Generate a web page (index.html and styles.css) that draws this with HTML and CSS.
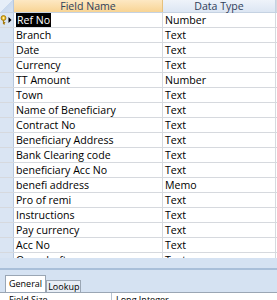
FILE: index.html
```html
<!DOCTYPE html>
<html lang="en">

<head>
    <meta charset="UTF-8">
    <title>Table Design</title>
    <link rel="stylesheet" href="styles.css">
</head>

<body>
    <div class="design">
        <div class="grid">
            <div class="row head">
                <div class="sel corner"></div>
                <div class="cell name-head">Field Name</div>
                <div class="cell type-head">Data Type</div>
                <div class="cell desc"></div>
            </div>
            <div class="row">
                <div class="sel current">
                    <svg width="13" height="10" viewBox="0 0 13 10">
                        <circle cx="3.5" cy="3" r="2.4" fill="#f2c62e" stroke="#a57a0d" stroke-width="1"/>
                        <circle cx="3.5" cy="3" r="0.8" fill="#fff"/>
                        <path d="M3.5 5.2 V9 M3.5 7.5 H5.3 M3.5 8.8 H5" stroke="#a57a0d" stroke-width="1.2"/>
                        <path d="M8.5 2 L11.5 5 L8.5 8 Z" fill="#000"/>
                    </svg>
                </div>
                <div class="cell"><span class="picked">Ref No</span></div>
                <div class="cell">Number</div>
                <div class="cell desc"></div>
            </div>
            <div class="row"><div class="sel"></div><div class="cell">Branch</div><div class="cell">Text</div><div class="cell desc"></div></div>
            <div class="row"><div class="sel"></div><div class="cell">Date</div><div class="cell">Text</div><div class="cell desc"></div></div>
            <div class="row"><div class="sel"></div><div class="cell">Currency</div><div class="cell">Text</div><div class="cell desc"></div></div>
            <div class="row"><div class="sel"></div><div class="cell">TT Amount</div><div class="cell">Number</div><div class="cell desc"></div></div>
            <div class="row"><div class="sel"></div><div class="cell">Town</div><div class="cell">Text</div><div class="cell desc"></div></div>
            <div class="row"><div class="sel"></div><div class="cell">Name of Beneficiary</div><div class="cell">Text</div><div class="cell desc"></div></div>
            <div class="row"><div class="sel"></div><div class="cell">Contract No</div><div class="cell">Text</div><div class="cell desc"></div></div>
            <div class="row"><div class="sel"></div><div class="cell">Beneficiary Address</div><div class="cell">Text</div><div class="cell desc"></div></div>
            <div class="row"><div class="sel"></div><div class="cell">Bank Clearing code</div><div class="cell">Text</div><div class="cell desc"></div></div>
            <div class="row"><div class="sel"></div><div class="cell">beneficiary Acc No</div><div class="cell">Text</div><div class="cell desc"></div></div>
            <div class="row"><div class="sel"></div><div class="cell">benefi address</div><div class="cell">Memo</div><div class="cell desc"></div></div>
            <div class="row"><div class="sel"></div><div class="cell">Pro of remi</div><div class="cell">Text</div><div class="cell desc"></div></div>
            <div class="row"><div class="sel"></div><div class="cell">Instructions</div><div class="cell">Text</div><div class="cell desc"></div></div>
            <div class="row"><div class="sel"></div><div class="cell">Pay currency</div><div class="cell">Text</div><div class="cell desc"></div></div>
            <div class="row"><div class="sel"></div><div class="cell">Acc No</div><div class="cell">Text</div><div class="cell desc"></div></div>
            <div class="row"><div class="sel"></div><div class="cell">Over draft</div><div class="cell">Text</div><div class="cell desc"></div></div>
        </div>

        <div class="splitter"></div>

        <div class="tab-bar">
            <div class="tab active">General</div>
            <div class="tab">Lookup</div>
        </div>

        <div class="props">
            <div class="prop-name">Field Size</div>
            <div class="prop-value">Long Integer</div>
        </div>
    </div>
</body>

</html>
```

FILE: styles.css
```css
body {
    margin: 0;
    padding: 0;
    background-color: #ffffff;
    font-family: "Open Sans", "Noto Sans", Arial, sans-serif;
    font-size: 10.6px;
    color: #000;
}

.design {
    width: 277px;
    height: 300px;
    overflow: hidden;
}

.grid {
    height: 258px;
    overflow: hidden;
    background-color: #ffffff;
}

.row {
    display: grid;
    grid-template-columns: 14px 149px 113px 1fr;
    height: 14px;
    border-bottom: 1px solid #d6d9de;
}

.row.head {
    height: 12px;
    border-bottom: 1px solid #c5d2e2;
}

.sel {
    background-color: #dae5f3;
    border-right: 1px solid #b7c8de;
    display: flex;
    align-items: center;
    justify-content: center;
}

.corner {
    background: linear-gradient(135deg, #e6eef8 0%, #e6eef8 50%, #c9d9ee 51%, #d6e2f2 100%);
}

.current svg {
    display: block;
}

.cell {
    border-right: 1px solid #d6d9de;
    padding-left: 2px;
    line-height: 14px;
    white-space: nowrap;
    overflow: hidden;
}

.head .cell {
    line-height: 12px;
    text-align: center;
    color: #30405a;
    padding-left: 0;
    overflow: visible;
}

.name-head {
    background: linear-gradient(#fde8c3, #f8d494);
    border-right: 1px solid #e6c17e !important;
}

.type-head {
    background: linear-gradient(#eef3fa, #dce6f3);
    border-right: 1px solid #c5d2e2 !important;
}

.head .desc {
    background: linear-gradient(#eef3fa, #dce6f3);
}

.picked {
    background-color: #000;
    color: #fff;
    padding: 1px 1px;
}

.splitter {
    height: 10px;
    background-color: #d5e2f2;
    border-bottom: 2px solid #a9bfd9;
}

.tab-bar {
    display: flex;
    align-items: flex-end;
    height: 22px;
    padding-left: 5px;
    background-color: #d5e2f2;
    border-bottom: 1px solid #9aa6b4;
    font-size: 9px;
}

.tab {
    height: 11px;
    line-height: 12px;
    padding: 0 1px;
    border: 1px solid #9aa6b4;
    border-bottom: 0;
    background-color: #e8eef6;
}

.tab.active {
    height: 16px;
    line-height: 16px;
    background-color: #ffffff;
    padding: 0 3px;
}

.props {
    display: grid;
    grid-template-columns: 112px 1fr;
    line-height: 13px;
    font-size: 9px;
}

.prop-name {
    padding-left: 9px;
    border-right: 1px solid #b8c4d2;
}

.prop-value {
    padding-left: 4px;
}
```
